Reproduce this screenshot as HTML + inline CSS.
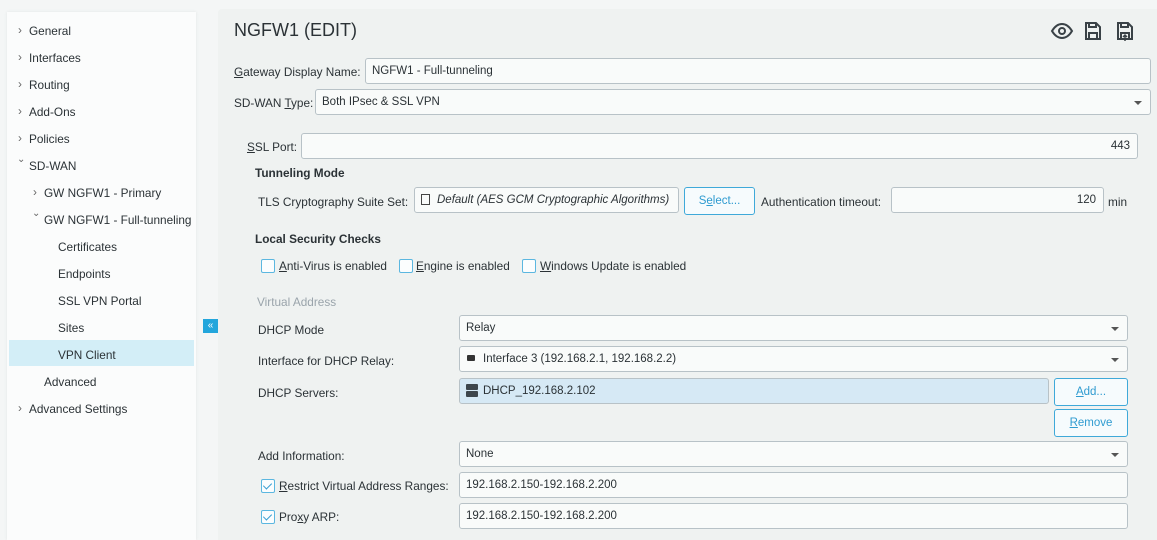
<!DOCTYPE html><html><head><style>
*{box-sizing:border-box;margin:0;padding:0}
html,body{width:1157px;height:540px;overflow:hidden}
body{background:#f4f6f6;font-family:"Liberation Sans","DejaVu Sans",sans-serif;font-size:11.8px;color:#2b3236;position:relative}
.a{position:absolute;white-space:nowrap}
.side{position:absolute;left:7px;top:12px;width:189px;height:528px;background:#fbfcfc;box-shadow:0 0 3px #e2e6e6}
.main{position:absolute;left:218px;top:9px;width:939px;height:531px;background:#eff2f1;border-radius:4px 0 0 0}
.f{position:absolute;background:#f9fbfa;border:1px solid #b8c2c7;border-radius:3px;height:26px;line-height:24px;padding-left:6px;font-size:11.5px;white-space:nowrap;overflow:hidden}
.dd::after{content:"";position:absolute;right:8px;top:11px;border-left:4px solid transparent;border-right:4px solid transparent;border-top:4px solid #555}
.btn{position:absolute;border:1px solid #3fa9d9;border-radius:3px;background:#f6fbfd;color:#2f9bd0;text-align:center;height:28px;line-height:26px;font-size:11.5px}
.cb{position:absolute;width:14px;height:14px;border:1px solid #5bb7e0;border-radius:2px;background:#fbfdfe}
.ck::after{content:"";position:absolute;left:3px;top:1px;width:4px;height:7px;border:solid #3a9fd2;border-width:0 1.5px 1.5px 0;transform:rotate(45deg)}
.b{font-weight:bold}
u{text-decoration:underline}
</style></head><body>
<div class="side"></div>
<div class="a" style="left:18px;top:23px;color:#666">›</div><div class="a" style="left:29px;top:24px">General</div>
<div class="a" style="left:18px;top:50px;color:#666">›</div><div class="a" style="left:29px;top:51px">Interfaces</div>
<div class="a" style="left:18px;top:77px;color:#666">›</div><div class="a" style="left:29px;top:78px">Routing</div>
<div class="a" style="left:18px;top:104px;color:#666">›</div><div class="a" style="left:29px;top:105px">Add-Ons</div>
<div class="a" style="left:18px;top:131px;color:#666">›</div><div class="a" style="left:29px;top:132px">Policies</div>
<div class="a" style="left:17px;top:154px;color:#666;font-size:10px">⌄</div><div class="a" style="left:29px;top:159px">SD-WAN</div>
<div class="a" style="left:33px;top:185px;color:#666">›</div><div class="a" style="left:44px;top:186px">GW NGFW1 - Primary</div>
<div class="a" style="left:32px;top:208px;color:#666;font-size:10px">⌄</div><div class="a" style="left:44px;top:213px">GW NGFW1 - Full-tunneling</div>
<div class="a" style="left:58px;top:240px">Certificates</div>
<div class="a" style="left:58px;top:267px">Endpoints</div>
<div class="a" style="left:58px;top:294px">SSL VPN Portal</div>
<div class="a" style="left:58px;top:321px">Sites</div>
<div class="a" style="left:9px;top:340px;width:185px;height:26px;background:#d3eef7"></div>
<div class="a" style="left:58px;top:348px">VPN Client</div>
<div class="a" style="left:44px;top:375px">Advanced</div>
<div class="a" style="left:18px;top:401px;color:#666">›</div><div class="a" style="left:29px;top:402px">Advanced Settings</div>
<div class="a" style="left:203px;top:319px;width:15px;height:14px;background:#23a6dc;color:#fff;font-size:10px;line-height:13px;text-align:center">«</div>
<div class="main"></div>
<div class="a" style="left:234px;top:20px;font-size:18px">NGFW1 (EDIT)</div>
<svg class="a" style="left:1050px;top:19px" width="90" height="24" viewBox="0 0 90 24" fill="none" stroke="#3a4247" stroke-width="2">
<path d="M2 12c3-5 6-7 10-7s7 2 10 7c-3 5-6 7-10 7s-7-2-10-7z"/><circle cx="12" cy="12" r="3"/>
<path d="M36 4h10l4 4v12h-14z"/><path d="M39 4v4h7v-4M39 20v-6h8v6"/>
<path d="M68 4h10l4 4v12h-14z"/><path d="M71 4v4h7v-4M71 20v-6h8v6"/><path d="M75 22v-6M73 18l2-2 2 2" stroke-width="1.5"/>
</svg>
<div class="a" style="left:234px;top:65px"><u>G</u>ateway Display Name:</div>
<div class="f" style="left:365px;top:58px;width:786px">NGFW1 - Full-tunneling</div>
<div class="a" style="left:234px;top:96px">SD-WAN <u>T</u>ype:</div>
<div class="f dd" style="left:315px;top:89px;width:836px">Both IPsec &amp; SSL VPN</div>
<div class="a" style="left:247px;top:140px"><u>S</u>SL Port:</div>
<div class="f" style="left:301px;top:133px;width:837px;text-align:right;padding-right:7px">443</div>
<div class="a b" style="left:255px;top:166px">Tunneling Mode</div>
<div class="a" style="left:258px;top:195px">TLS Cryptography Suite Set:</div>
<div class="f" style="left:414px;top:187px;width:265px;font-style:italic;padding-left:22px">Default (AES GCM Cryptographic Algorithms)</div>
<div class="a" style="left:421px;top:194px;width:9px;height:11px;border:1px solid #444"></div>
<div class="btn" style="left:684px;top:187px;width:71px">S<u>e</u>lect...</div>
<div class="a" style="left:761px;top:195px">Authentication timeout:</div>
<div class="f" style="left:891px;top:187px;width:213px;text-align:right;padding-right:7px">120</div>
<div class="a" style="left:1108px;top:195px">min</div>
<div class="a b" style="left:255px;top:232px">Local Security Checks</div>
<div class="cb" style="left:261px;top:259px"></div><div class="a" style="left:279px;top:259px"><u>A</u>nti-Virus is enabled</div>
<div class="cb" style="left:399px;top:259px"></div><div class="a" style="left:416px;top:259px"><u>E</u>ngine is enabled</div>
<div class="cb" style="left:522px;top:259px"></div><div class="a" style="left:540px;top:259px"><u>W</u>indows Update is enabled</div>
<div class="a" style="left:257px;top:295px;color:#9aa4ab">Virtual Address</div>
<div class="a" style="left:258px;top:323px">DHCP Mode</div>
<div class="f dd" style="left:459px;top:315px;width:669px">Relay</div>
<div class="a" style="left:258px;top:354px">Interface for DHCP Relay:</div>
<div class="f dd" style="left:459px;top:346px;width:669px;padding-left:23px">Interface 3 (192.168.2.1, 192.168.2.2)</div>
<div class="a" style="left:467px;top:355px;width:8px;height:6px;background:#333;border-radius:1px"></div>
<div class="a" style="left:258px;top:386px">DHCP Servers:</div>
<div class="f" style="left:459px;top:378px;width:590px;background:#d6e9f5;padding-left:23px">DHCP_192.168.2.102</div>
<div class="a" style="left:466px;top:384px;width:12px;height:6px;background:#3d464c;border-radius:1px"></div>
<div class="a" style="left:466px;top:391px;width:12px;height:6px;background:#3d464c;border-radius:1px"></div>
<div class="btn" style="left:1054px;top:378px;width:74px"><u>A</u>dd...</div>
<div class="btn" style="left:1054px;top:409px;width:74px"><u>R</u>emove</div>
<div class="a" style="left:258px;top:449px">Add Information:</div>
<div class="f dd" style="left:459px;top:441px;width:669px">None</div>
<div class="cb ck" style="left:261px;top:479px"></div><div class="a" style="left:279px;top:479px"><u>R</u>estrict Virtual Address Ranges:</div>
<div class="f" style="left:459px;top:472px;width:669px">192.168.2.150-192.168.2.200</div>
<div class="cb ck" style="left:261px;top:510px"></div><div class="a" style="left:279px;top:510px">Pro<u>x</u>y ARP:</div>
<div class="f" style="left:459px;top:503px;width:669px">192.168.2.150-192.168.2.200</div>
</body></html>
